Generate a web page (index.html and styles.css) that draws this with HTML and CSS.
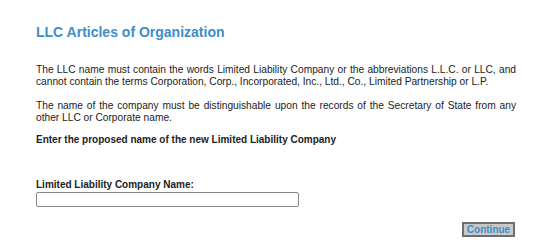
FILE: index.html
```html
<!DOCTYPE html>
<html>
<head>
<meta charset="utf-8">
<link rel="stylesheet" href="styles.css">
</head>
<body>
<div class="page">
  <h1 class="title">LLC Articles of Organization</h1>
  <p class="text">The LLC name must contain the words Limited Liability Company or the abbreviations L.L.C. or LLC, and cannot contain the terms Corporation, Corp., Incorporated, Inc., Ltd., Co., Limited Partnership or L.P.</p>
  <p class="text">The name of the company must be distinguishable upon the records of the Secretary of State from any other LLC or Corporate name.</p>
  <p class="text strong">Enter the proposed name of the new Limited Liability Company</p>
  <div class="field">
    <label class="label" for="name">Limited Liability Company Name:</label>
    <input class="input" id="name" type="text">
  </div>
  <div class="actions">
    <button class="btn" type="button">Continue</button>
  </div>
</div>
</body>
</html>
```
FILE: styles.css
```css
html, body {
  margin: 0;
  padding: 0;
  background: #ffffff;
}
.page {
  width: 480px;
  padding: 24px 0 0 36px;
  font-family: "Liberation Sans", Arial, sans-serif;
  color: #222222;
}
.title {
  margin: 0 0 24px 0;
  font-size: 14px;
  font-weight: bold;
  color: #3d8ec9;
  line-height: 16px;
}
.text {
  margin: 0 0 12px 0;
  font-size: 10.2px;
  line-height: 12px;
  text-align: justify;
}
.text + .text {
  margin-top: 1px;
}
.strong {
  font-weight: bold;
  font-size: 10px;
  margin-top: -2px !important;
}
.field {
  margin-top: 33px;
  display: flex;
  flex-direction: column;
  align-items: flex-start;
}
.label {
  font-size: 10px;
  font-weight: bold;
  line-height: 12px;
  margin-bottom: 1px;
}
.input {
  box-sizing: border-box;
  width: 263px;
  height: 15px;
  margin: 0;
  border: 1px solid #888888;
  border-radius: 2px;
  padding: 0 2px;
  font-size: 10px;
  font-family: "Liberation Sans", Arial, sans-serif;
}
.actions {
  display: flex;
  justify-content: flex-end;
  margin-top: 15px;
  padding-right: 1px;
}
.btn {
  box-sizing: border-box;
  height: 15px;
  width: 53px;
  padding: 0;
  margin: 0;
  background: #c8c8c8;
  border: 2px solid #6e6e6e;
  border-radius: 0;
  color: #3d8ec9;
  font-family: "Liberation Sans", Arial, sans-serif;
  font-size: 10px;
  font-weight: bold;
  line-height: 11px;
}
```
